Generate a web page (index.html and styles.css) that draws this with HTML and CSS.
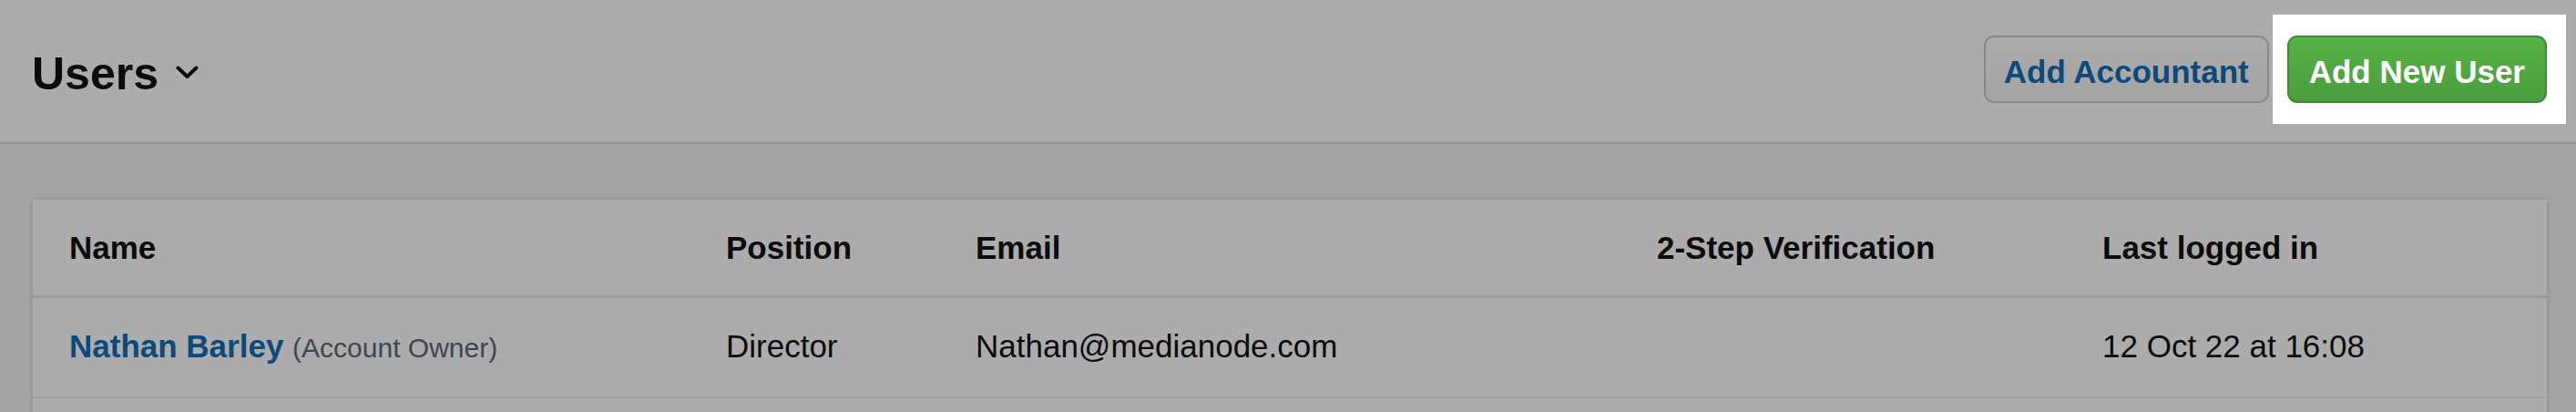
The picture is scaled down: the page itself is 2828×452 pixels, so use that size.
FILE: index.html
```html
<!DOCTYPE html>
<html lang="en">
<head>
<meta charset="utf-8">
<title>Users</title>
<link rel="stylesheet" href="styles.css">
</head>
<body>
<header class="page-header">
  <div class="title">
    <h1>Users</h1>
    <svg class="chevron" width="25" height="15" viewBox="0 0 25 15" aria-hidden="true">
      <polyline points="2.5,2.5 12.5,12 22.5,2.5" fill="none" stroke="#111" stroke-width="4" stroke-linecap="round" stroke-linejoin="round"/>
    </svg>
  </div>
  <div class="actions">
    <button class="btn btn-secondary">Add Accountant</button>
    <span class="spotlight"><button class="btn btn-primary">Add New User</button></span>
  </div>
</header>

<main class="content">
  <section class="card">
    <div class="row row-head">
      <div class="cell">Name</div>
      <div class="cell">Position</div>
      <div class="cell">Email</div>
      <div class="cell">2-Step Verification</div>
      <div class="cell">Last logged in</div>
    </div>
    <div class="row">
      <div class="cell"><a class="user-link" href="#">Nathan Barley</a> <span class="role">(Account Owner)</span></div>
      <div class="cell">Director</div>
      <div class="cell">Nathan@medianode.com</div>
      <div class="cell"></div>
      <div class="cell">12 Oct 22 at 16:08</div>
    </div>
    <div class="row row-empty"></div>
  </section>
</main>

<div class="overlay"></div>
</body>
</html>
```

FILE: styles.css
```css
html, body {
  margin: 0;
  padding: 0;
  overflow: hidden;
}

body {
  background: #f4f4f4;
  font-family: "Liberation Sans", Arial, Helvetica, sans-serif;
  color: #111111;
  width: 2828px;
  height: 452px;
}

.page-header {
  display: flex;
  align-items: center;
  justify-content: space-between;
  height: 74px;
  padding: 39px 32px 43px 35px;
  background: #ffffff;
  border-bottom: 2px solid #d4dae1;
}

.title {
  display: flex;
  align-items: center;
  gap: 19px;
  margin-top: 9px;
}

.title h1 {
  margin: 0;
  font-size: 50px;
  line-height: 50px;
  font-weight: 700;
  color: #111111;
}

.chevron {
  display: block;
  margin-top: -3px;
}

.actions {
  display: flex;
  align-items: center;
  gap: 20px;
}

.btn {
  font-family: "Liberation Sans", Arial, Helvetica, sans-serif;
  font-size: 35px;
  font-weight: 700;
  line-height: 40px;
  padding: 18px 22px 12px;
  border-radius: 11px;
  border: 2px solid transparent;
  cursor: pointer;
  display: block;
}

.btn-secondary {
  padding-left: 20px;
  padding-right: 20px;
  background: linear-gradient(#ffffff, #f4f4f4);
  border-color: #c7cdd4;
  color: #126eb8;
}

.btn-primary {
  background: linear-gradient(#56b347, #4a9d3c);
  border-color: #3f8b34;
  color: #ffffff;
}

.spotlight {
  position: relative;
  z-index: 20;
  display: block;
  background: #ffffff;
  padding: 23px 21px 23px 16px;
  margin: -23px -21px -23px -16px;
}

.content {
  padding: 61px 32px 0 36px;
}

.card {
  background: #ffffff;
  box-shadow: 0 0 7px rgba(0, 0, 0, 0.16);
}

.row {
  display: grid;
  grid-template-columns: 721px 274px 748px 489px 1fr;
  border-bottom: 2px solid #f0f0f0;
}

.row-head {
  font-weight: 700;
  border-bottom: 3px solid #e0e5eb;
}

.row-head .cell {
  padding: 33px 0 32px 40px;
}

.cell {
  padding: 33px 0 33px 40px;
  font-size: 35px;
  line-height: 40px;
  white-space: nowrap;
}

.user-link {
  color: #126eb8;
  font-weight: 700;
  text-decoration: none;
}

.role {
  font-size: 30px;
  color: #5d6a77;
}

.row-empty {
  height: 60px;
  border-bottom: none;
}

.overlay {
  position: fixed;
  inset: 0;
  z-index: 10;
  background: rgba(0, 0, 0, 0.325);
}
```
